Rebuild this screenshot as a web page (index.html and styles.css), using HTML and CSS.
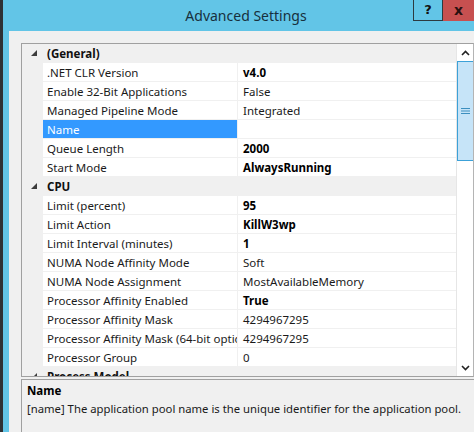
FILE: index.html
```html
<!DOCTYPE html>
<html lang="en">
<head>
  <meta charset="UTF-8" />
  <title>Advanced Settings</title>
  <link rel="stylesheet" href="styles.css">
</head>
<body>
  <div class="window">
    <div class="titlebar">
      <div class="title">Advanced Settings</div>
      <div class="caption-btn help">?</div>
      <div class="caption-btn close">x</div>
    </div>

    <div class="client">
      <div class="grid">
        <div class="rows">
          <div class="row cat"><span class="gutter"><svg width="6" height="6" viewBox="0 0 6 6"><polygon points="6,0 6,6 0,6" /></svg></span><span class="name">(General)</span></div>
          <div class="row"><span class="gutter"></span><span class="name">.NET CLR Version</span><span class="value b">v4.0</span></div>
          <div class="row"><span class="gutter"></span><span class="name">Enable 32-Bit Applications</span><span class="value">False</span></div>
          <div class="row"><span class="gutter"></span><span class="name">Managed Pipeline Mode</span><span class="value">Integrated</span></div>
          <div class="row"><span class="gutter"></span><span class="name sel">Name</span><span class="value"></span></div>
          <div class="row"><span class="gutter"></span><span class="name">Queue Length</span><span class="value b">2000</span></div>
          <div class="row"><span class="gutter"></span><span class="name">Start Mode</span><span class="value b">AlwaysRunning</span></div>
          <div class="row cat"><span class="gutter"><svg width="6" height="6" viewBox="0 0 6 6"><polygon points="6,0 6,6 0,6" /></svg></span><span class="name">CPU</span></div>
          <div class="row"><span class="gutter"></span><span class="name">Limit (percent)</span><span class="value b">95</span></div>
          <div class="row"><span class="gutter"></span><span class="name">Limit Action</span><span class="value b">KillW3wp</span></div>
          <div class="row"><span class="gutter"></span><span class="name">Limit Interval (minutes)</span><span class="value b">1</span></div>
          <div class="row"><span class="gutter"></span><span class="name">NUMA Node Affinity Mode</span><span class="value">Soft</span></div>
          <div class="row"><span class="gutter"></span><span class="name">NUMA Node Assignment</span><span class="value">MostAvailableMemory</span></div>
          <div class="row"><span class="gutter"></span><span class="name">Processor Affinity Enabled</span><span class="value b">True</span></div>
          <div class="row"><span class="gutter"></span><span class="name">Processor Affinity Mask</span><span class="value">4294967295</span></div>
          <div class="row"><span class="gutter"></span><span class="name">Processor Affinity Mask (64-bit option)</span><span class="value">4294967295</span></div>
          <div class="row"><span class="gutter"></span><span class="name">Processor Group</span><span class="value">0</span></div>
          <div class="row cat"><span class="gutter"><svg width="6" height="6" viewBox="0 0 6 6"><polygon points="6,0 6,6 0,6" /></svg></span><span class="name">Process Model</span></div>
        </div>

        <div class="scrollbar">
          <div class="arrow"><svg width="9" height="6" viewBox="0 0 9 6"><polyline points="1,5 4.5,1.5 8,5" /></svg></div>
          <div class="thumb">
            <svg width="9" height="8" viewBox="0 0 9 8"><path d="M0 1.5h9M0 4h9M0 6.5h9" /></svg>
          </div>
          <div class="track"></div>
          <div class="arrow"><svg width="9" height="6" viewBox="0 0 9 6"><polyline points="1,1 4.5,4.5 8,1" /></svg></div>
        </div>
      </div>

      <div class="desc">
        <div class="desc-title">Name</div>
        <div class="desc-text">[name] The application pool name is the unique identifier for the application pool.</div>
      </div>
    </div>
  </div>
</body>
</html>
```

FILE: styles.css
```css
body {
  margin: 0;
  overflow: hidden;
  background: #2e3135;
  font-family: "Noto Sans", "Open Sans", sans-serif;
  font-size: 11.5px;
  color: #000;
}

.window {
  margin-left: 3px;
  height: 432px;
  background: #62c5e7;
  display: flex;
  flex-direction: column;
}

/* title bar */

.titlebar {
  height: 31px;
  flex: none;
  display: grid;
  grid-template-columns: 1fr 30px 31px;
}

.title {
  padding-left: 76px;
  text-align: center;
  font-size: 14px;
  line-height: 31px;
  color: #17303d;
}

.caption-btn {
  height: 21px;
  line-height: 20px;
  text-align: center;
  font-family: "DejaVu Sans", sans-serif;
  font-weight: bold;
  font-size: 13px;
  box-sizing: border-box;
}

.help {
  border: 1px solid #2d3a40;
  border-top: 0;
  color: #111;
}

.close {
  background: #c75050;
  color: #2a1010;
  font-size: 14px;
}

/* client area */

.client {
  flex: 1;
  margin-left: 6px;
  background: #f0f0f0;
  padding: 12px 0 0 12px;
  display: flex;
  flex-direction: column;
  min-height: 0;
}

.grid {
  height: 334px;
  flex: none;
  box-sizing: border-box;
  border: 1px solid #a0a0a0;
  border-right-color: #b4b4b4;
  background: #fff;
  display: flex;
  overflow: hidden;
}

.rows {
  width: 434px;
  flex: none;
  overflow: hidden;
}

.row {
  display: flex;
  height: 18px;
  line-height: 20px;
  border-bottom: 1px solid #f0f0f0;
  white-space: nowrap;
}

.gutter {
  width: 21px;
  flex: none;
  background: #f0f0f0;
  display: flex;
  align-items: center;
  justify-content: center;
}

.gutter svg {
  fill: #3c3c3c;
  margin-left: 3px;
}

.name {
  width: 195px;
  height: 18px;
  flex: none;
  padding-left: 4px;
  box-sizing: border-box;
  overflow: hidden;
  border-right: 1px solid #f0f0f0;
  color: #1a1a1a;
}

.name.sel {
  background: #3399ff;
  color: #fff;
}

.value {
  flex: 1;
  padding-left: 5px;
  color: #1a1a1a;
}

.value.b {
  font-weight: bold;
  color: #000;
}

.row.cat {
  background: #f0f0f0;
}

.row.cat .name {
  font-weight: bold;
  border-right: 0;
  color: #111;
}

/* scrollbar */

.scrollbar {
  width: 17px;
  flex: none;
  display: flex;
  flex-direction: column;
  border-left: 1px solid #e6e6e6;
}

.arrow {
  height: 17px;
  display: flex;
  align-items: center;
  justify-content: center;
  background: #fff;
}

.arrow svg {
  fill: none;
  stroke: #222;
  stroke-width: 1.6;
}

.thumb {
  height: 100px;
  box-sizing: border-box;
  background: #c6e4f8;
  border: 1px solid #3ca1d8;
  display: flex;
  align-items: center;
  justify-content: center;
}

.thumb svg {
  stroke: #3c8fbf;
  stroke-width: 1.2;
}

.track {
  flex: 1;
  background: #fff;
}

/* description pane */

.desc {
  flex: 1;
  margin-top: 2px;
  border-top: 1px solid #a0a0a0;
  border-left: 1px solid #a0a0a0;
  background: #f0f0f0;
  padding: 2px 0 0 5px;
}

.desc-title {
  font-weight: bold;
  line-height: 18px;
}

.desc-text {
  font-size: 11.3px;
  line-height: 18px;
  white-space: nowrap;
  color: #1a1a1a;
}
```
